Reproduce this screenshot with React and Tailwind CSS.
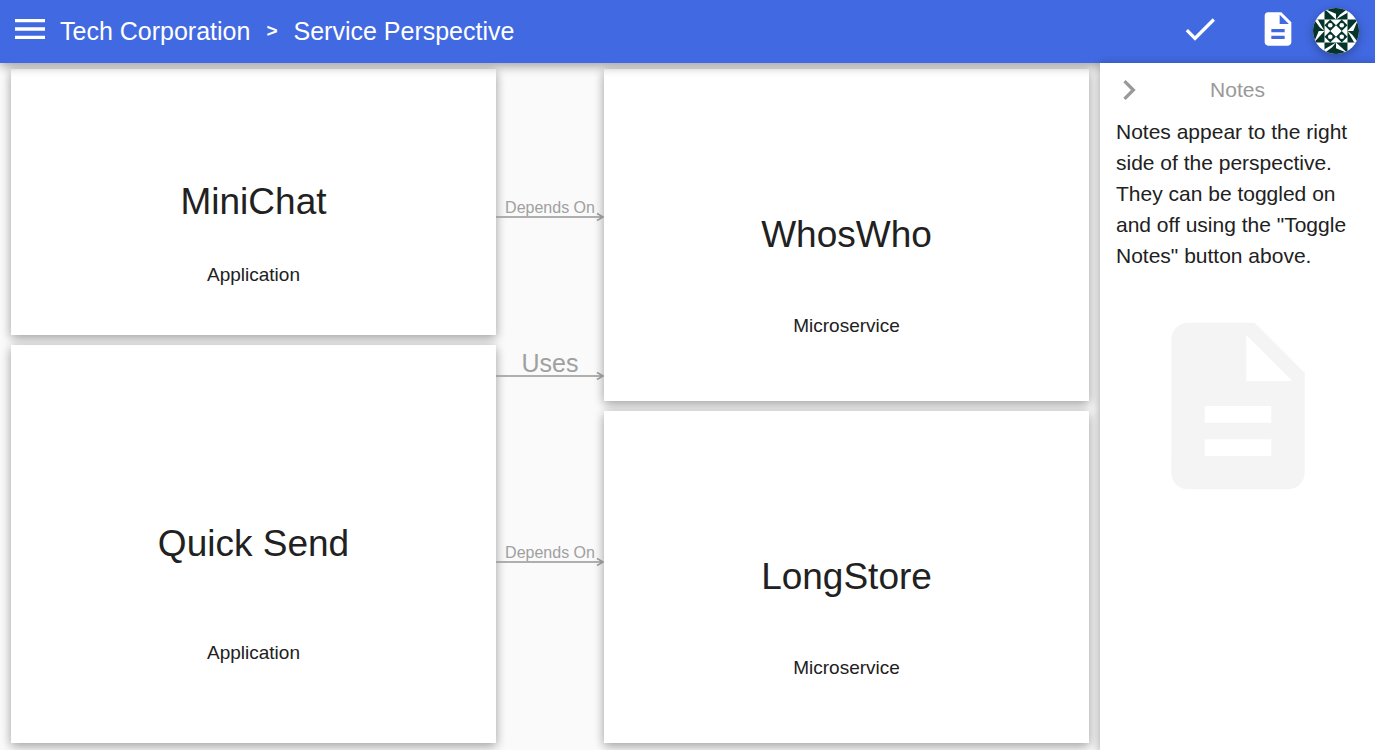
import React, { useState } from 'react';
import { MdMenu, MdDone, MdDescription, MdChevronRight } from 'react-icons/md';

const COLUMNS = [
  [
    { name: 'MiniChat', type: 'Application', grow: 'grow-2' },
    { name: 'Quick Send', type: 'Application', grow: 'grow-3' },
  ],
  [
    { name: 'WhosWho', type: 'Microservice', grow: 'grow' },
    { name: 'LongStore', type: 'Microservice', grow: 'grow' },
  ],
];

const LINKS = [
  { id: 1, label: 'Depends On', size: 'text-[16px] leading-[8px]' },
  { id: 2, label: 'Uses', size: 'text-[25px] leading-4' },
  { id: 3, label: 'Depends On', size: 'text-[16px] leading-[8px]' },
];

const Avatar = () => (
  <svg viewBox="0 0 48 48" className="size-full">
    <rect width="48" height="48" fill="#fff" />
    {[0, 90, 180, 270].map(angle => (
      <g key={angle} transform={`rotate(${angle} 24 24)`}>
        {/* Side cells with their blades */}
        <path d="M12 0H36V12H12Z" fill="#04342a" />
        <path d="M12 1L24 6V12ZM24 12L28 7L36 1V5Z" fill="#fff" />
        {/* Diamond ring */}
        <path d="M18 12L24 18L18 24L12 18Z" fill="#04342a" />
        <circle cx="18" cy="18" r="2.4" fill="#fff" />
      </g>
    ))}
  </svg>
);

const Card = ({ item }) => (
  <article className={`${item.grow} basis-0 grid grid-rows-[36fr_28fr_27fr_9fr] justify-items-center items-center bg-white shadow-[0_3px_10px_rgba(0,0,0,0.16),0_3px_10px_rgba(0,0,0,0.23)]`}>
    <h2 className="row-start-2 text-[37px] leading-[44px]">{item.name}</h2>
    <p className="row-start-3 text-[19px] leading-6">{item.type}</p>
  </article>
);

const Column = ({ items }) => (
  <div className="flex-1 flex flex-col gap-[10px]">
    {items.map(item => <Card key={item.name} item={item} />)}
  </div>
);

const Link = ({ link }) => (
  <div className="self-end text-center text-[#a0a0a0]">
    <div className={link.size}>{link.label}</div>
    <svg viewBox="0 0 108 9" className="block w-full" fill="none" stroke="#969696" strokeWidth="1.5">
      <path d="M0 5H107M101 1.5L107.5 5L101 8.5" />
    </svg>
  </div>
);

const App = () => {
  const [showNotes, setShowNotes] = useState(true);

  return (
    <div className="min-h-screen flex flex-col bg-[#fafafa] text-[#212121] font-['Liberation_Sans',Arial,sans-serif]">
      <header className="relative z-10 h-[63px] flex items-center pl-[10px] pr-4 pb-[2px] bg-[#4169e1] text-white shadow-[0_3px_10px_rgba(0,0,0,0.16),0_3px_10px_rgba(0,0,0,0.23)]">
        <button type="button" aria-label="Menu" className="mb-1">
          <MdMenu className="size-10" />
        </button>
        <nav className="flex-1 flex items-center pl-[10px] text-[25px] leading-8">
          <a href="#organization">Tech Corporation</a>
          <span className="px-4 text-[19px] font-bold">&gt;</span>
          <a href="#perspective">Service Perspective</a>
        </nav>
        <div className="flex items-center">
          <button type="button" aria-label="Done" className="mb-1 mr-[38px]">
            <MdDone className="size-10" />
          </button>
          <button type="button" aria-label="Toggle Notes" className="mb-1 mr-[15px]" onClick={() => setShowNotes(!showNotes)}>
            <MdDescription className="size-10" />
          </button>
          <button type="button" aria-label="Account" className="size-[46px] rounded-full overflow-hidden shadow-[0_3px_10px_rgba(0,0,0,0.3)]">
            <Avatar />
          </button>
        </div>
      </header>

      <div className="flex-1 flex">
        <main className="flex-1 flex px-[11px] pt-[6px] pb-[7px]">
          <Column items={COLUMNS[0]} />
          <div className="relative w-[108px] grid grid-rows-[152fr_159fr_186fr_177fr]">
            {LINKS.map(link => <Link key={link.id} link={link} />)}
          </div>
          <Column items={COLUMNS[1]} />
        </main>

        {showNotes && (
          <aside className="relative z-20 w-1/5 bg-white shadow-[0_3px_10px_rgba(0,0,0,0.16),0_3px_10px_rgba(0,0,0,0.23)]">
            <div className="grid grid-cols-[40px_1fr_40px] items-center px-[9px] pt-[7px] text-[#999999]">
              <button type="button" aria-label="Hide notes" onClick={() => setShowNotes(false)}>
                <MdChevronRight className="size-10" />
              </button>
              <h3 className="text-center text-[21px]">Notes</h3>
            </div>
            <p className="px-4 pt-[6px] text-[21px] leading-[31px]">
              Notes appear to the right side of the perspective. They can be toggled on and off using the "Toggle Notes" button above.
            </p>
            <MdDescription className="size-[200px] mx-auto mt-[35px] text-[#f4f4f4]" />
          </aside>
        )}
      </div>
    </div>
  );
};

export default App;
